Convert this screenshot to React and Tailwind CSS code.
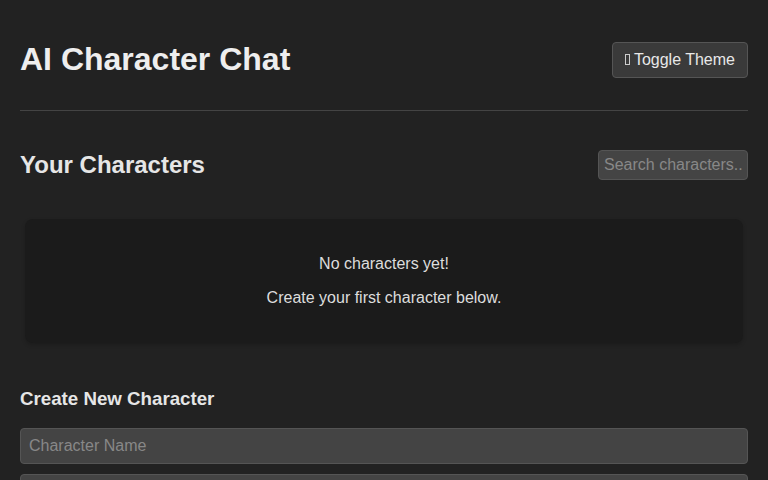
export default function App() {
  return (
    <div className="min-h-[480px] bg-[#222222] text-[#eeeeee] px-5 pt-5 pb-5" style={{ fontFamily: '"Liberation Sans", Arial, sans-serif' }}>
      <header className="flex items-center justify-between border-b border-[#444444] pb-[10px]">
        <h1 className="my-[21.44px] text-[32px] leading-[37px] font-bold text-[#eeeeee]">AI Character Chat</h1>
        <button className="h-9 px-[12px] rounded-[4px] border border-[#555555] bg-[#3a3a3a] text-[16px] text-[#e8e8e8] flex items-center gap-[4px]">
          <span className="inline-block w-[5px] h-[11px] border border-[#cccccc]"></span>
          <span>Toggle Theme</span>
        </button>
      </header>
      <section className="mt-5">
        <div className="flex items-center justify-between">
          <h2 className="my-[19.92px] text-[24px] leading-[28px] font-bold text-[#e6e6e6]">Your Characters</h2>
          <input
            className="w-[150px] h-[30px] px-[5px] rounded-[4px] border border-[#555555] bg-[#444444] text-[16px] text-[#dddddd] placeholder:text-[#888888] outline-none"
            placeholder="Search characters..."
          />
        </div>
        <div className="mx-[5px] mt-5 rounded-[8px] bg-[#1b1b1b] p-5 text-center text-[16px] text-[#dddddd] shadow-[0_2px_4px_rgba(0,0,0,0.2)]">
          <p className="my-4 leading-[18px]">No characters yet!</p>
          <p className="my-4 leading-[18px]">Create your first character below.</p>
        </div>
      </section>
      <section className="mt-[45px]">
        <h3 className="mb-[18px] text-[18.72px] leading-[22px] font-bold text-[#e6e6e6]">Create New Character</h3>
        <div className="flex flex-col gap-[10px]">
          <input
            className="w-full h-9 px-2 rounded-[4px] border border-[#555555] bg-[#444444] text-[16px] text-[#dddddd] placeholder:text-[#888888] outline-none"
            placeholder="Character Name"
          />
          <input
            className="w-full h-9 px-2 rounded-[4px] border border-[#555555] bg-[#444444] text-[16px] text-[#dddddd] placeholder:text-[#888888] outline-none"
            placeholder="Personality"
          />
        </div>
      </section>
    </div>
  );
}
